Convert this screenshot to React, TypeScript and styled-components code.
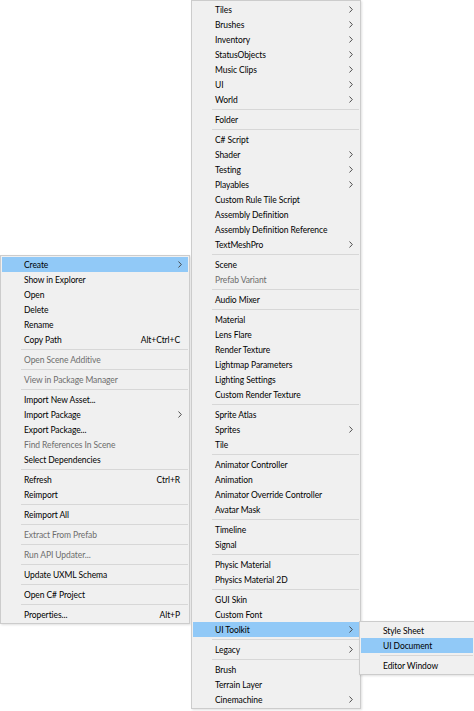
import React from 'react'
import styled, { createGlobalStyle } from 'styled-components'

const GlobalStyle = createGlobalStyle`
  html, body {
    margin: 0;
    padding: 0;
    background: #ffffff;
  }
  body {
    font-family: Lato, "Noto Sans", "DejaVu Sans", sans-serif;
  }
`

type Entry =
  | { kind: 'sep' }
  | { kind: 'item'; label: string; shortcut?: string; sub?: boolean; disabled?: boolean; active?: boolean }

const sep: Entry = { kind: 'sep' }
const it = (label: string, opts: Partial<Omit<Extract<Entry, { kind: 'item' }>, 'kind' | 'label'>> = {}): Entry => ({
  kind: 'item',
  label,
  ...opts,
})

const assetMenu: Entry[] = [
  it('Create', { sub: true, active: true }),
  it('Show in Explorer'),
  it('Open'),
  it('Delete'),
  it('Rename'),
  it('Copy Path', { shortcut: 'Alt+Ctrl+C' }),
  sep,
  it('Open Scene Additive', { disabled: true }),
  sep,
  it('View in Package Manager', { disabled: true }),
  sep,
  it('Import New Asset...'),
  it('Import Package', { sub: true }),
  it('Export Package...'),
  it('Find References In Scene', { disabled: true }),
  it('Select Dependencies'),
  sep,
  it('Refresh', { shortcut: 'Ctrl+R' }),
  it('Reimport'),
  sep,
  it('Reimport All'),
  sep,
  it('Extract From Prefab', { disabled: true }),
  sep,
  it('Run API Updater...', { disabled: true }),
  sep,
  it('Update UXML Schema'),
  sep,
  it('Open C# Project'),
  sep,
  it('Properties...', { shortcut: 'Alt+P' }),
]

const createMenu: Entry[] = [
  it('Tiles', { sub: true }),
  it('Brushes', { sub: true }),
  it('Inventory', { sub: true }),
  it('StatusObjects', { sub: true }),
  it('Music Clips', { sub: true }),
  it('UI', { sub: true }),
  it('World', { sub: true }),
  sep,
  it('Folder'),
  sep,
  it('C# Script'),
  it('Shader', { sub: true }),
  it('Testing', { sub: true }),
  it('Playables', { sub: true }),
  it('Custom Rule Tile Script'),
  it('Assembly Definition'),
  it('Assembly Definition Reference'),
  it('TextMeshPro', { sub: true }),
  sep,
  it('Scene'),
  it('Prefab Variant', { disabled: true }),
  sep,
  it('Audio Mixer'),
  sep,
  it('Material'),
  it('Lens Flare'),
  it('Render Texture'),
  it('Lightmap Parameters'),
  it('Lighting Settings'),
  it('Custom Render Texture'),
  sep,
  it('Sprite Atlas'),
  it('Sprites', { sub: true }),
  it('Tile'),
  sep,
  it('Animator Controller'),
  it('Animation'),
  it('Animator Override Controller'),
  it('Avatar Mask'),
  sep,
  it('Timeline'),
  it('Signal'),
  sep,
  it('Physic Material'),
  it('Physics Material 2D'),
  sep,
  it('GUI Skin'),
  it('Custom Font'),
  it('UI Toolkit', { sub: true, active: true }),
  sep,
  it('Legacy', { sub: true }),
  sep,
  it('Brush'),
  it('Terrain Layer'),
  it('Cinemachine', { sub: true }),
]

const toolkitMenu: Entry[] = [
  it('Style Sheet'),
  it('UI Document', { active: true }),
  sep,
  it('Editor Window'),
]

const Page = styled.div`
  display: flex;
  align-items: flex-start;
  width: 474px;
  height: 711px;
  overflow: hidden;
`

const Column = styled.div<{ $top: number; $shift?: number }>`
  padding-top: ${({ $top }) => $top}px;
  margin-left: ${({ $shift }) => $shift ?? 0}px;
  flex-shrink: 0;
`

const Menu = styled.div<{ $width: number }>`
  width: ${({ $width }) => $width}px;
  box-sizing: border-box;
  background: #f0f0f0;
  border: 1px solid #cccccc;
  padding: 1px;
  box-shadow: 1px 1px 2px rgba(0, 0, 0, 0.12);
`

const Row = styled.div<{ $active?: boolean; $disabled?: boolean }>`
  display: flex;
  align-items: center;
  height: 15px;
  padding: 0 6px 0 22px;
  font-size: 8.5px;
  letter-spacing: -0.08px;
  white-space: nowrap;
  color: ${({ $disabled }) => ($disabled ? '#6d6d6d' : '#000000')};
  background: ${({ $active }) => ($active ? '#91c9f7' : 'transparent')};
`

const Label = styled.span`
  flex: 1;
`

const Shortcut = styled.span`
  margin-right: 2px;
`

const Arrow = styled.svg`
  width: 4px;
  height: 7px;
  flex-shrink: 0;
`

const Separator = styled.div`
  height: 5px;
  display: flex;
  align-items: center;
  padding-left: 19px;

  &::after {
    content: '';
    flex: 1;
    height: 1px;
    background: #d7d7d7;
  }
`

const MenuList: React.FC<{ entries: Entry[]; width: number }> = ({ entries, width }) => (
  <Menu $width={width}>
    {entries.map((e, i) =>
      e.kind === 'sep' ? (
        <Separator key={i} />
      ) : (
        <Row key={i} $active={e.active} $disabled={e.disabled}>
          <Label>{e.label}</Label>
          {e.shortcut && <Shortcut>{e.shortcut}</Shortcut>}
          {e.sub && (
            <Arrow viewBox="0 0 4 7">
              <polyline points="0.5,0.5 3.3,3.5 0.5,6.5" fill="none" stroke="#3c3c3c" strokeWidth="0.9" />
            </Arrow>
          )}
        </Row>
      )
    )}
  </Menu>
)

export default function App() {
  return (
    <>
      <GlobalStyle />
      <Page>
        <Column $top={255}>
          <MenuList entries={assetMenu} width={190} />
        </Column>
        <Column $top={0} $shift={1}>
          <MenuList entries={createMenu} width={170} />
        </Column>
        <Column $top={621} $shift={-2}>
          <MenuList entries={toolkitMenu} width={116} />
        </Column>
      </Page>
    </>
  )
}
